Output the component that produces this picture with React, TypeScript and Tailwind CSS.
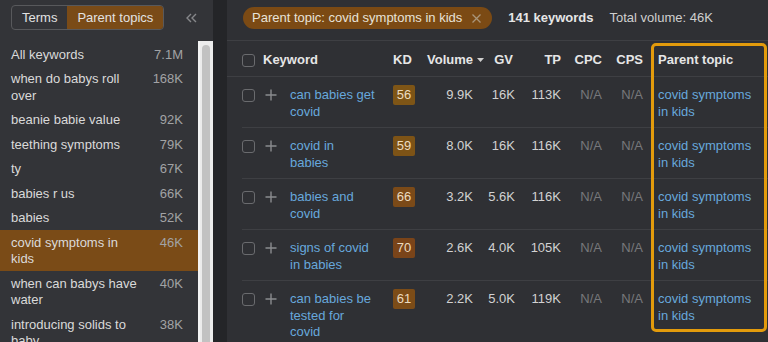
import React from 'react';

interface SideItem {
  lines: string[];
  value: string;
  active?: boolean;
}

interface Row {
  kw: string[];
  kd: number;
  kdColor: string;
  vol: string;
  gv: string;
  tp: string;
}

const sideItems: SideItem[] = [
  { lines: ['All keywords'], value: '7.1M' },
  { lines: ['when do babys roll', 'over'], value: '168K' },
  { lines: ['beanie babie value'], value: '92K' },
  { lines: ['teething symptoms'], value: '79K' },
  { lines: ['ty'], value: '67K' },
  { lines: ['babies r us'], value: '66K' },
  { lines: ['babies'], value: '52K' },
  { lines: ['covid symptoms in', 'kids'], value: '46K', active: true },
  { lines: ['when can babys have', 'water'], value: '40K' },
  { lines: ['introducing solids to', 'baby'], value: '38K' },
];

const rows: Row[] = [
  { kw: ['can babies get', 'covid'], kd: 56, kdColor: 'bg-[#7e5516]', vol: '9.9K', gv: '16K', tp: '113K' },
  { kw: ['covid in', 'babies'], kd: 59, kdColor: 'bg-[#7d5316]', vol: '8.0K', gv: '16K', tp: '116K' },
  { kw: ['babies and', 'covid'], kd: 66, kdColor: 'bg-[#7b4a18]', vol: '3.2K', gv: '5.6K', tp: '116K' },
  { kw: ['signs of covid', 'in babies'], kd: 70, kdColor: 'bg-[#7a4419]', vol: '2.6K', gv: '4.0K', tp: '105K' },
  { kw: ['can babies be', 'tested for', 'covid'], kd: 61, kdColor: 'bg-[#7c4c17]', vol: '2.2K', gv: '5.0K', tp: '119K' },
];

function Checkbox() {
  return <span className="block h-[13px] w-[13px] rounded-[3px] border border-[#6a6b6e]" />;
}

function Plus() {
  return (
    <svg width="12" height="12" viewBox="0 0 12 12" className="text-[#8b8c8f]">
      <path d="M6 0.5v11M0.5 6h11" stroke="currentColor" strokeWidth="1.4" />
    </svg>
  );
}

function Sidebar() {
  return (
    <aside className="flex w-[213px] shrink-0 flex-col bg-[#333438]">
      <div className="flex h-[41px] shrink-0 items-start justify-between pl-[11px] pr-[16px] pt-[5px]">
        <div className="flex h-[25px] overflow-hidden rounded-[4px] border border-[#58595c] text-[13px] text-[#e2e2e2]">
          <span className="flex items-center px-[10px]">Terms</span>
          <span className="flex items-center bg-[#7a4b17] px-[10px]">Parent topics</span>
        </div>
        <svg width="11" height="10" viewBox="0 0 11 10" className="mt-[8px] text-[#86878a]">
          <path d="M5 1L1 5l4 4M10 1L6 5l4 4" fill="none" stroke="currentColor" strokeWidth="1.4" />
        </svg>
      </div>
      <div className="flex min-h-0 flex-1">
        <ul className="w-[198px] overflow-hidden pt-[1px] text-[13px] leading-[16.5px]">
          {sideItems.map((item, i) => (
            <li
              key={i}
              className={`flex justify-between pb-[3.5px] pl-[11px] pr-[15px] pt-[4.5px] ${item.active ? 'bg-[#7a4b17]' : ''}`}
            >
              <span className="text-[#dadada]">
                {item.lines.map((l, j) => (
                  <span key={j} className="block">{l}</span>
                ))}
              </span>
              <span className="text-[#a2a3a5]">{item.value}</span>
            </li>
          ))}
        </ul>
        <div className="w-[15px] border-l-2 border-[#f4f4f4] bg-[#ececec] pt-[4px] pl-[2px]">
          <div className="h-full w-[8px] rounded-t-full bg-[#c2c2c2]" />
        </div>
      </div>
    </aside>
  );
}

function Table() {
  return (
    <div className="relative flex min-w-0 flex-1 flex-col bg-[#2f3034]">
      <div className="flex h-[41px] shrink-0 items-start border-b border-[#3e3f43] pl-[16px] pt-[7px] text-[13px]">
        <span className="flex h-[22px] items-center gap-[10px] rounded-full bg-[#7b4a14] pl-[9px] pr-[11px] text-[#e8e2d8]">
          Parent topic: covid symptoms in kids
          <svg width="9" height="9" viewBox="0 0 9 9" className="text-[#a8957a]">
            <path d="M0.5 0.5l8 8M8.5 0.5l-8 8" stroke="currentColor" strokeWidth="1.3" />
          </svg>
        </span>
        <span className="ml-[16px] flex h-[22px] items-center font-bold text-[#e6e6e6]">141 keywords</span>
        <span className="ml-[16px] flex h-[22px] items-center text-[#cfcfcf]">Total volume: 46K</span>
      </div>

      <div className="flex h-[36px] shrink-0 items-center border-b border-[#3e3f43] pl-[15px] pt-[3px] text-[13px] font-bold text-[#e6e6e6]">
        <span className="w-[21px]"><Checkbox /></span>
        <span className="w-[130px]">Keyword</span>
        <span className="w-[30px]">KD</span>
        <span className="flex w-[61px] items-center justify-end gap-[4px]">
          Volume
          <svg width="7" height="4" viewBox="0 0 7 4" className="text-[#cfcfcf]">
            <path d="M0 0h7L3.5 4z" fill="currentColor" />
          </svg>
        </span>
        <span className="w-[29px] text-right">GV</span>
        <span className="w-[48px] text-right">TP</span>
        <span className="w-[41px] text-right">CPC</span>
        <span className="w-[41px] text-right">CPS</span>
        <span className="pl-[15px]">Parent topic</span>
      </div>

      <div className="ml-[15px] text-[13px] leading-[16.5px]">
        {rows.map((r, i) => (
          <div key={i} className="flex items-start border-b border-[#3e3f43] pb-[7px] pt-[10px]">
            <span className="flex h-[16.5px] w-[21px] items-center"><Checkbox /></span>
            <span className="flex h-[16.5px] w-[27px] items-center pl-[2px]"><Plus /></span>
            <span className="w-[103px] text-[#67a8dc]">
              {r.kw.map((l, j) => (
                <span key={j} className="block">{l}</span>
              ))}
            </span>
            <span className="w-[30px]">
              <span className={`-mt-[2px] flex h-[20px] w-[22px] items-center justify-center rounded-[2px] ${r.kdColor} text-[#ecdcc0]`}>
                {r.kd}
              </span>
            </span>
            <span className="w-[50px] text-right text-[#d2d2d2]">{r.vol}</span>
            <span className="w-[42px] text-right text-[#d2d2d2]">{r.gv}</span>
            <span className="w-[46px] text-right text-[#d2d2d2]">{r.tp}</span>
            <span className="w-[41px] text-right text-[#77787b]">N/A</span>
            <span className="w-[41px] text-right text-[#77787b]">N/A</span>
            <span className="pl-[15px] text-[#67a8dc]">
              <span className="block">covid symptoms</span>
              <span className="block">in kids</span>
            </span>
          </div>
        ))}
      </div>

      <div className="pointer-events-none absolute left-[424px] top-[43px] h-[289px] w-[116px] rounded-[5px] border-[3px] border-[#e39b0c]" />
    </div>
  );
}

export default function App() {
  return (
    <div className="flex h-[342px] w-[768px] overflow-hidden font-['Liberation_Sans',Arial,sans-serif]">
      <Sidebar />
      <div className="w-[14px] shrink-0 bg-[#242528]" />
      <Table />
    </div>
  );
}
